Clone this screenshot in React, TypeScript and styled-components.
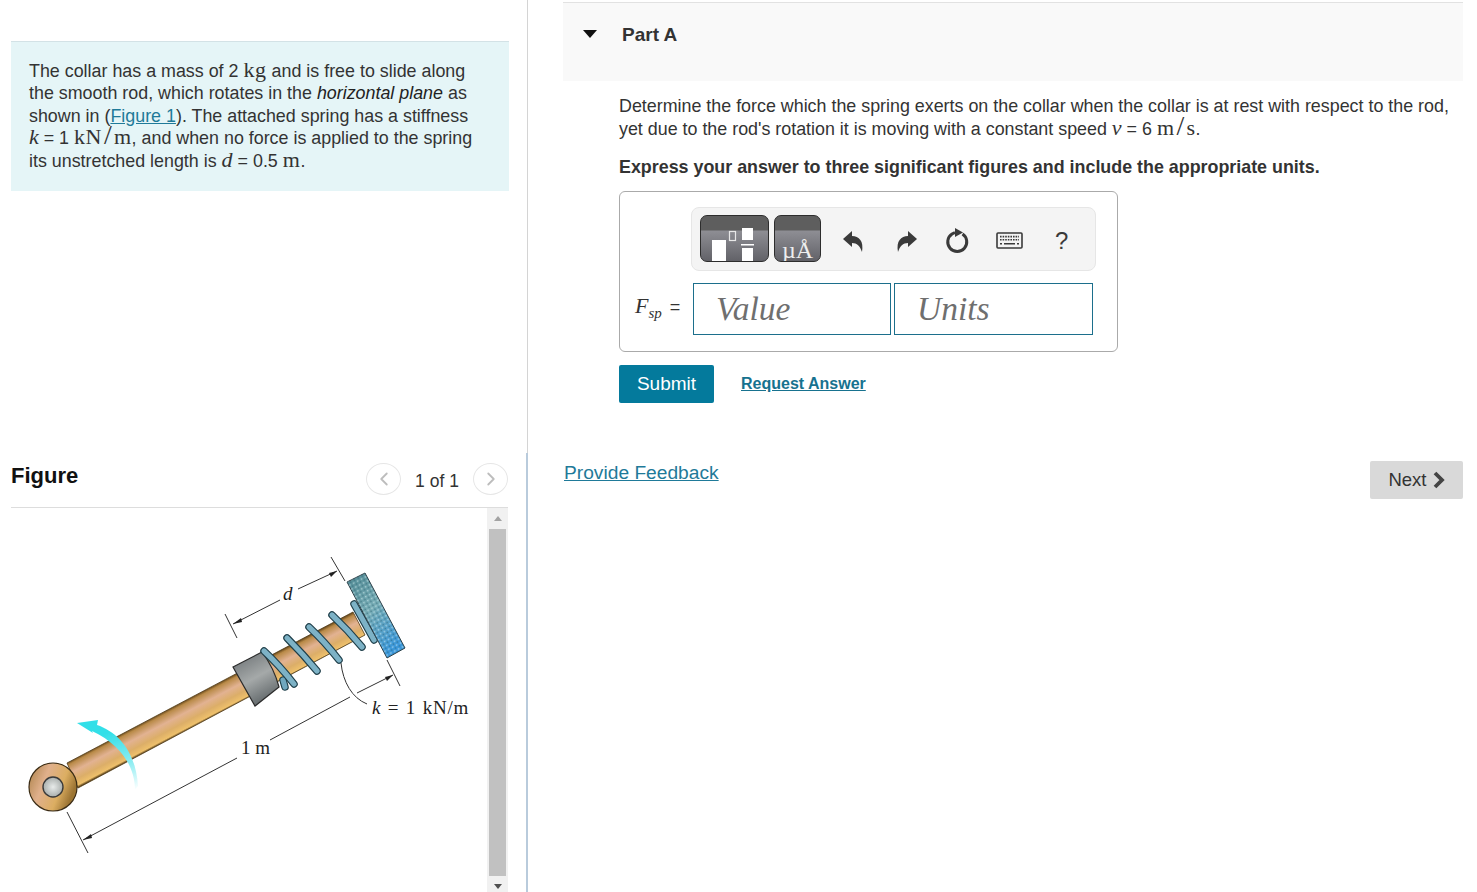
import React from 'react';
import styled, { createGlobalStyle } from 'styled-components';
import { ChevronLeft, ChevronRight } from 'lucide-react';

const GlobalStyle = createGlobalStyle`
  html, body {
    margin: 0;
    padding: 0;
    background: #fff;
  }
  body {
    font-family: "Liberation Sans", Arial, sans-serif;
    font-size: 17.87px;
    color: #333;
  }
`;

const UndoIcon = ({ flip }: { flip?: boolean }) => (
  <svg width="22" height="24" viewBox="0 0 22 24" style={flip ? { transform: 'scaleX(-1)' } : undefined}>
    <path d="M0 10 L9 2 V7 C16 7 21 12 19 23 C17 17 14 14 9 14 V18 Z" fill="#3a3a3a" />
  </svg>
);

const ResetIcon = () => (
  <svg width="26" height="28" viewBox="0 0 26 28">
    <path d="M18.5 7 A9.5 9.5 0 1 1 8 7 L11 5.5" fill="none" stroke="#3a3a3a" strokeWidth="3" />
    <path d="M11 1 L19 5.5 L11 10 Z" fill="#3a3a3a" />
  </svg>
);

const KeyboardIcon = () => (
  <svg width="27" height="17" viewBox="0 0 27 17">
    <rect x="1" y="1" width="25" height="15" rx="1" fill="#f4f4f4" stroke="#3a3a3a" strokeWidth="1.6" />
    <path d="M4 4.6 H23" stroke="#3a3a3a" strokeWidth="1.6" strokeDasharray="1.6 1" />
    <path d="M4 7.8 H23" stroke="#3a3a3a" strokeWidth="1.6" strokeDasharray="1.6 1" />
    <path d="M4 11.8 H6 M8 11.8 H19 M21 11.8 H23" stroke="#3a3a3a" strokeWidth="1.6" />
  </svg>
);

const NextChevron = () => (
  <svg width="13" height="18" viewBox="0 0 13 18">
    <path d="M3 2 L10 9 L3 16" fill="none" stroke="#444" strokeWidth="3.8" />
  </svg>
);

const FractionGlyphs = () => (
  <svg width="67" height="33" viewBox="0 0 67 33">
    <rect x="11" y="12" width="14" height="21" fill="#fff" />
    <rect x="28.5" y="3.5" width="6" height="9" fill="none" stroke="#e8e8e8" strokeWidth="1.2" />
    <rect x="41" y="0" width="11" height="12" fill="#fff" />
    <rect x="40" y="16" width="13" height="1.5" fill="#fff" />
    <rect x="41" y="20" width="11" height="13" fill="#fff" />
  </svg>
);

const coils = [
  'M264 651 Q280 666 294 684',
  'M287 638 Q303 654 317 671',
  'M309 627 Q325 642 339 660',
  'M332 615 Q348 630 362 647',
];

const RodFigure = () => (
  <FigureSvg viewBox="11 508 476 384" width="476" height="384">
    <defs>
      <linearGradient id="rodFill" gradientUnits="userSpaceOnUse" x1="150" y1="719" x2="162.6" y2="743">
        <stop offset="0" stopColor="#6d4c1c" />
        <stop offset="0.1" stopColor="#b98a48" />
        <stop offset="0.4" stopColor="#e2b292" />
        <stop offset="0.7" stopColor="#dcae68" />
        <stop offset="0.92" stopColor="#eec06c" />
        <stop offset="1" stopColor="#5c4218" />
      </linearGradient>
      <linearGradient id="eyeFill" x1="0" y1="0" x2="1" y2="0.4">
        <stop offset="0" stopColor="#a97f45" />
        <stop offset="0.4" stopColor="#e0b08c" />
        <stop offset="0.75" stopColor="#dcae62" />
        <stop offset="1" stopColor="#9c7433" />
      </linearGradient>
      <radialGradient id="pinFill">
        <stop offset="0" stopColor="#e8ebea" />
        <stop offset="1" stopColor="#a9aeac" />
      </radialGradient>
      <linearGradient id="collarFill" gradientUnits="userSpaceOnUse" x1="240" y1="660" x2="262" y2="700">
        <stop offset="0" stopColor="#7a7f81" />
        <stop offset="0.5" stopColor="#a5a9a9" />
        <stop offset="1" stopColor="#6a7072" />
      </linearGradient>
      <linearGradient id="plateFill" x1="0" y1="0" x2="0.6" y2="1">
        <stop offset="0" stopColor="#4f8892" />
        <stop offset="0.5" stopColor="#77adb6" />
        <stop offset="1" stopColor="#3a97da" />
      </linearGradient>
      <linearGradient id="swingFill" gradientUnits="userSpaceOnUse" x1="120" y1="730" x2="137" y2="790">
        <stop offset="0" stopColor="#33dfe8" />
        <stop offset="0.55" stopColor="#8fedf2" />
        <stop offset="1" stopColor="#ffffff" />
      </linearGradient>
      <pattern id="plateDots" width="4.4" height="4.4" patternUnits="userSpaceOnUse" patternTransform="rotate(-28)">
        <circle cx="1.1" cy="1.1" r="0.9" fill="#2c5e6e" opacity="0.5" />
        <circle cx="3.3" cy="3.3" r="0.9" fill="#d8eef2" opacity="0.55" />
      </pattern>
      <filter id="soften">
        <feGaussianBlur stdDeviation="0.35" />
      </filter>
    </defs>

    <g filter="url(#soften)">
      <g stroke="#333" strokeWidth="1" fill="none">
        <path d="M225 614 L237 638 M331 557 L345 581" />
        <path d="M233 624 L280 600 M298 589 L337 571" />
        <path d="M67 812 L88 853 M387 660 L400 686" />
        <path d="M83 840 L237 758 M270 740 L350 697 M357 693 L393 675" />
        <path d="M341 663 C343 682 352 698 367 704" />
      </g>
      <g fill="#222">
        <polygon points="233,624 241,618 242,622" />
        <polygon points="337,571 329,573 331,577" />
        <polygon points="83,840 91,834 92,838" />
        <polygon points="393,675 385,677 387,681" />
      </g>

      <polygon points="67,763 353,612 365,635 78,788" fill="url(#rodFill)" stroke="#4f3a16" strokeWidth="0.8" />

      <line x1="283" y1="680" x2="285" y2="687" stroke="#1f3f4a" strokeWidth="7.5" strokeLinecap="round" />
      <line x1="283" y1="680" x2="285" y2="687" stroke="#6fa8bf" strokeWidth="5.2" strokeLinecap="round" />

      <path
        d="M233 667 L262 652 Q274 668 279 687 L255 706 Z"
        fill="url(#collarFill)"
        stroke="#2c2c2c"
        strokeWidth="1.2"
      />

      <g strokeLinecap="round" fill="none">
        <g stroke="#1f3f4a" strokeWidth="7.5">
          {coils.map((d) => (
            <path key={d} d={d} />
          ))}
        </g>
        <g stroke="#7db2c6" strokeWidth="5.2">
          {coils.map((d) => (
            <path key={d} d={d} />
          ))}
        </g>
      </g>

      <line x1="354" y1="604" x2="374" y2="640" stroke="#1f3f4a" strokeWidth="7.5" strokeLinecap="round" />
      <line x1="354" y1="604" x2="374" y2="640" stroke="#7db2c6" strokeWidth="5.2" strokeLinecap="round" />
      <polygon points="347,582 365,573 405,648 387,658" fill="url(#plateFill)" stroke="#2c3f48" strokeWidth="1" />
      <polygon points="347,582 365,573 405,648 387,658" fill="url(#plateDots)" />

      <circle cx="53" cy="787" r="24" fill="url(#eyeFill)" stroke="#3a2c14" strokeWidth="1.2" />
      <circle cx="53" cy="787" r="10" fill="url(#pinFill)" stroke="#3a3a3a" strokeWidth="1.4" />

      <path
        d="M77 723 L98 720 L97 725 C118 732 136 752 138 786 L135 790 C135 768 122 745 92 731 L93 733 Z"
        fill="url(#swingFill)"
      />
    </g>

    <FigureLabel x="283" y="600" fontStyle="italic">d</FigureLabel>
    <FigureLabel x="241" y="754">1 m</FigureLabel>
    <WideLabel x="372" y="714">
      <tspan fontStyle="italic">k</tspan> = 1 kN/m
    </WideLabel>
  </FigureSvg>
);

const App = () => {
  return (
    <>
      <GlobalStyle />
      <Page>
        <ProblemPane>
          <InfoBox>
            The collar has a mass of 2 <MathRoman>kg</MathRoman> and is free to slide along the smooth rod, which
            rotates in the <Emphasis>horizontal plane</Emphasis> as shown in (<TextLink href="#figure">Figure 1</TextLink>). The
            attached spring has a stiffness <MathItalic>k</MathItalic> = 1 <MathRoman>kN</MathRoman>
            <MathSlash>/</MathSlash>
            <MathRoman>m</MathRoman>, and when no force is applied to the spring its unstretched length is{' '}
            <MathItalic>d</MathItalic> = 0.5 <MathRoman>m</MathRoman>.
          </InfoBox>
        </ProblemPane>

        <PartPane>
          <PartHeader>
            <Caret />
            <PartTitle>Part A</PartTitle>
          </PartHeader>
          <PartBody>
            <Question>
              Determine the force which the spring exerts on the collar when the collar is at rest with respect to the
              rod, yet due to the rod's rotation it is moving with a constant speed <MathItalic>v</MathItalic> = 6{' '}
              <MathRoman>m</MathRoman>
              <MathSlash>/</MathSlash>
              <MathRoman>s</MathRoman>.
            </Question>
            <Instruction>Express your answer to three significant figures and include the appropriate units.</Instruction>
            <AnswerBox>
              <Toolbar>
                <TemplateButton wide>
                  <FractionGlyphs />
                </TemplateButton>
                <TemplateButton>
                  <UnitGlyph>µÅ</UnitGlyph>
                </TemplateButton>
                <ToolSlot left={17}>
                  <UndoIcon />
                </ToolSlot>
                <ToolSlot left={30}>
                  <UndoIcon flip />
                </ToolSlot>
                <ToolSlot left={27}>
                  <ResetIcon />
                </ToolSlot>
                <ToolSlot left={26}>
                  <KeyboardIcon />
                </ToolSlot>
                <HelpMark>?</HelpMark>
              </Toolbar>
              <AnswerRow>
                <AnswerLabel>
                  <MathItalic>F</MathItalic>
                  <Subscript>sp</Subscript>
                  <LabelEquals>=</LabelEquals>
                </AnswerLabel>
                <AnswerInput placeholder="Value" />
                <AnswerInput placeholder="Units" />
              </AnswerRow>
            </AnswerBox>
            <ActionRow>
              <SubmitButton>Submit</SubmitButton>
              <RequestLink href="#answer">Request Answer</RequestLink>
            </ActionRow>
          </PartBody>
        </PartPane>

        <FigurePane>
          <FigureHeader>
            <FigureTitle>Figure</FigureTitle>
            <Pager>
              <PagerButton>
                <ChevronLeft size={22} strokeWidth={2} />
              </PagerButton>
              <PagerText>1 of 1</PagerText>
              <PagerButton>
                <ChevronRight size={22} strokeWidth={2} />
              </PagerButton>
            </Pager>
          </FigureHeader>
          <FigureBody>
            <RodFigure />
            <ScrollTrack>
              <ScrollArrow />
              <ScrollThumb />
              <ScrollArrow down />
            </ScrollTrack>
          </FigureBody>
        </FigurePane>

        <FooterPane>
          <FeedbackLink href="#feedback">Provide Feedback</FeedbackLink>
          <NextButton>
            Next
            <NextChevron />
          </NextButton>
        </FooterPane>
      </Page>
    </>
  );
};

const Page = styled.div`
  display: grid;
  grid-template-columns: 528px 1fr;
  grid-template-rows: 453px 439px;
  width: 1477px;
  height: 892px;
  overflow: hidden;
`;

const ProblemPane = styled.section`
  border-right: 1px solid #d4d4d4;
  padding: 41px 18px 0 11px;
`;

const InfoBox = styled.div`
  box-sizing: border-box;
  width: 498px;
  height: 150px;
  padding: 18px 32px 0 18px;
  background: #e5f5f7;
  border-top: 1px solid #d3e2e6;
  line-height: 22.4px;
`;

const MathRoman = styled.span`
  font-family: "Liberation Serif", "Times New Roman", serif;
  font-size: 22px;
  line-height: 0;
  letter-spacing: 0.6px;
`;

const MathItalic = styled.span`
  font-family: "Liberation Serif", "Times New Roman", serif;
  font-style: italic;
  font-size: 22px;
  line-height: 0;
`;

const MathSlash = styled.span`
  font-family: "Liberation Serif", "Times New Roman", serif;
  font-size: 28px;
  line-height: 0;
  margin: 0 2px;
`;

const Emphasis = styled.em`
  font-style: italic;
  color: #222;
`;

const TextLink = styled.a`
  color: #1f7a99;
  text-decoration: underline;
`;

const PartPane = styled.section`
  padding: 2px 14px 0 35px;
`;

const PartHeader = styled.header`
  display: flex;
  align-items: center;
  box-sizing: border-box;
  height: 79px;
  padding: 0 0 14px 20px;
  background: #f9f9f9;
  border-top: 1px solid #e2e2e2;
`;

const Caret = styled.span`
  width: 0;
  height: 0;
  border-left: 7.5px solid transparent;
  border-right: 7.5px solid transparent;
  border-top: 8px solid #111;
  margin-top: -2px;
`;

const PartTitle = styled.h2`
  margin: 0 0 0 25px;
  font-size: 19px;
  font-weight: bold;
  color: #333;
`;

const PartBody = styled.div`
  padding: 14px 0 0 56px;
`;

const Question = styled.p`
  margin: 0;
  line-height: 23px;
`;

const Instruction = styled.p`
  margin: 15px 0 0;
  font-weight: bold;
  line-height: 23px;
`;

const AnswerBox = styled.div`
  box-sizing: border-box;
  width: 499px;
  height: 161px;
  margin-top: 12px;
  padding: 15px 24px 0 15px;
  border: 1px solid #aaa;
  border-radius: 6px;
`;

const Toolbar = styled.div`
  display: flex;
  align-items: center;
  box-sizing: border-box;
  width: 405px;
  height: 64px;
  margin-left: 56px;
  padding: 0 0 0 8px;
  background: #f4f4f4;
  border: 1px solid #e6e6e6;
  border-radius: 8px;
`;

const TemplateButton = styled.div<{ wide?: boolean }>`
  display: flex;
  justify-content: center;
  align-items: flex-end;
  box-sizing: border-box;
  width: ${(props) => (props.wide ? '69px' : '47px')};
  height: 47px;
  margin-right: 5px;
  margin-top: -2px;
  overflow: hidden;
  border: 1px solid #2d2d2d;
  border-radius: 7px;
  background: linear-gradient(#5e5e5e 0, #5e5e5e 14px, #8e8e94 15px, #626268 100%);
`;

const UnitGlyph = styled.span`
  font-family: "Liberation Serif", "Times New Roman", serif;
  font-size: 24px;
  line-height: 24px;
  margin-bottom: -1px;
  color: #eee;
  white-space: nowrap;
`;

const ToolSlot = styled.div<{ left: number }>`
  display: flex;
  margin-left: ${(props) => props.left}px;
  margin-top: 3px;
`;

const HelpMark = styled.span`
  margin-left: 32px;
  margin-top: 3px;
  font-size: 24px;
  color: #3a3a3a;
`;

const AnswerRow = styled.div`
  display: flex;
  align-items: center;
  margin-top: 12px;
`;

const AnswerLabel = styled.div`
  width: 58px;
  margin-top: -4px;
  font-size: 18px;
  white-space: nowrap;
`;

const Subscript = styled.sub`
  font-family: "Liberation Serif", "Times New Roman", serif;
  font-style: italic;
  font-size: 15px;
  line-height: 0;
`;

const LabelEquals = styled.span`
  margin-left: 8px;
`;

const AnswerInput = styled.input`
  box-sizing: border-box;
  width: 198px;
  height: 52px;
  margin-right: 3px;
  padding: 0 0 0 22px;
  border: 1px solid #1c6f8c;
  border-radius: 0;
  outline: none;
  font-family: "Liberation Serif", "Times New Roman", serif;
  font-style: italic;
  font-size: 33.5px;

  &::placeholder {
    color: #6f6f6f;
    opacity: 1;
  }

  &:last-child {
    width: 199px;
    margin-right: 0;
  }
`;

const ActionRow = styled.div`
  display: flex;
  align-items: center;
  margin-top: 13px;
`;

const SubmitButton = styled.button`
  width: 95px;
  height: 38px;
  padding: 0;
  border: none;
  border-radius: 2px;
  background: #047a9c;
  color: #fff;
  font-family: "Liberation Sans", Arial, sans-serif;
  font-size: 19px;
`;

const RequestLink = styled.a`
  margin-left: 27px;
  color: #17728f;
  font-size: 16px;
  font-weight: bold;
  text-decoration: underline;
`;

const FigurePane = styled.section`
  padding: 0 19px 0 11px;
  border-right: 2px solid #b9cbdc;
`;

const FigureHeader = styled.header`
  display: flex;
  justify-content: space-between;
  align-items: center;
  box-sizing: border-box;
  width: 497px;
  height: 55px;
  border-bottom: 1px solid #ddd;
`;

const FigureTitle = styled.h2`
  margin: -8px 0 0;
  font-size: 22px;
  font-weight: bold;
  color: #111;
`;

const Pager = styled.div`
  display: flex;
  align-items: center;
  margin-top: -3px;
`;

const PagerButton = styled.div`
  display: flex;
  justify-content: center;
  align-items: center;
  box-sizing: border-box;
  width: 35px;
  height: 32px;
  border: 1px solid #e6e6e6;
  border-radius: 50%;
  color: #bdbdbd;
`;

const PagerText = styled.span`
  width: 72px;
  margin-top: 6px;
  text-align: center;
  font-size: 17.5px;
`;

const FigureBody = styled.div`
  display: flex;
  width: 497px;
  height: 384px;
`;

const FigureSvg = styled.svg`
  display: block;
  flex: none;
`;

const FigureLabel = styled.text`
  font-family: "Liberation Serif", "Times New Roman", serif;
  font-size: 19px;
  fill: #222;
`;

const WideLabel = styled(FigureLabel)`
  letter-spacing: 0.8px;
  word-spacing: 1px;
`;

const ScrollTrack = styled.div`
  display: flex;
  flex-direction: column;
  align-items: center;
  width: 21px;
  background: #f1f1f1;
`;

const ScrollArrow = styled.span<{ down?: boolean }>`
  flex: none;
  width: 0;
  height: 0;
  margin: ${(props) => (props.down ? '8px 0 3px' : '8px 0')};
  border-left: 4.5px solid transparent;
  border-right: 4.5px solid transparent;
  ${(props) => (props.down ? 'border-top: 5px solid #505050;' : 'border-bottom: 5px solid #a3a3a3;')}
`;

const ScrollThumb = styled.div`
  flex: 1;
  width: 17px;
  background: #c1c1c1;
`;

const FooterPane = styled.section`
  display: flex;
  justify-content: space-between;
  align-items: flex-start;
  padding: 8px 14px 0 36px;
`;

const FeedbackLink = styled.a`
  margin-top: 1px;
  color: #1f7a99;
  font-size: 19.2px;
  text-decoration: underline;
`;

const NextButton = styled.button`
  display: flex;
  align-items: center;
  justify-content: center;
  gap: 5px;
  width: 93px;
  height: 38px;
  padding: 0;
  border: none;
  border-radius: 2px;
  background: #d9d9d9;
  color: #333;
  font-family: "Liberation Sans", Arial, sans-serif;
  font-size: 18.5px;
`;

export default App;
